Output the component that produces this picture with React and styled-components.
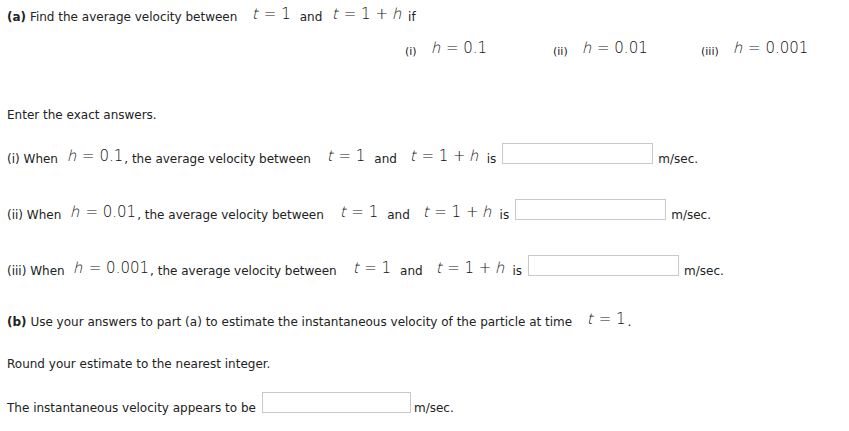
import React from "react";
import styled, { createGlobalStyle } from "styled-components";

const GlobalStyle = createGlobalStyle`
  body {
    margin: 0;
    background: #fff;
    font-family: "DejaVu Sans", Verdana, sans-serif;
    font-size: 12px;
    color: #222;
  }
`;

const Page = styled.div`
  padding: 2px 0 0 7px;
  width: 849px;
  box-sizing: border-box;
`;

const Line = styled.div`
  height: 24px;
  line-height: 24px;
  white-space: nowrap;
  margin-top: ${({ gap }) => gap || 0}px;
`;

const Label = styled.b`
  font-weight: bold;
`;

const Math = styled.span`
  font-family: "DejaVu Sans", sans-serif;
  font-weight: 200;
  font-size: 15px;
  vertical-align: 2px;
  margin: 0 ${({ right }) => (right === undefined ? 6 : right)}px 0 ${({ left }) => (left === undefined ? 6 : left)}px;
  color: #111;
`;

// slanted letter drawn from the light upright face
const Var = styled.span`
  display: inline-block;
  font-style: normal;
  transform: skewX(-14deg);
`;

const Choices = styled.div`
  display: grid;
  grid-template-columns: repeat(3, 148px);
  padding-left: 398px;
  height: 24px;
  line-height: 24px;
  margin-top: 10px;
`;

const Choice = styled.div`
  white-space: nowrap;
`;

const Small = styled.span`
  font-size: 11px;
  margin-right: 15px;
`;

const Answer = styled.input`
  width: ${({ size }) => size || 151}px;
  height: 21px;
  box-sizing: border-box;
  border: 1px solid #c9c9c9;
  margin: ${({ lift }) => -(lift || 1)}px ${({ after }) => after || 5}px 0 6px;
  padding: 0 3px;
  vertical-align: top;
  font: inherit;
`;

const T1 = (props) => (
  <Math {...props}>
    <Var>t</Var> = 1
  </Math>
);

const T1H = (props) => (
  <Math {...props}>
    <Var>t</Var> = 1 + <Var>h</Var>
  </Math>
);

const H = ({ value, ...props }) => (
  <Math {...props}>
    <Var>h</Var> = {value}
  </Math>
);

const parts = [
  { tag: "(i)", h: "0.1", gap: 17 },
  { tag: "(ii)", h: "0.01", gap: 32 },
  { tag: "(iii)", h: "0.001", gap: 32 },
];

export default function App() {
  return (
    <Page>
      <GlobalStyle />
      <Line>
        <Label>(a)</Label> Find the average velocity between <T1 left={12} right={9} />
        and <T1H left={7} right={2} /> if
      </Line>
      <Choices>
        {parts.map((p) => (
          <Choice key={p.tag}>
            <Small>{p.tag}</Small>
            <H value={p.h} left={0} />
          </Choice>
        ))}
      </Choices>
      <Line gap={43}>Enter the exact answers.</Line>
      {parts.map((p) => (
        <Line key={p.tag} gap={p.gap}>
          {p.tag} When <H value={p.h} left={6} right={1} />, the average velocity between{" "}
          <T1 left={13} right={9} />and <T1H left={10} right={3} /> is
          <Answer type="text" />
          m/sec.
        </Line>
      ))}
      <Line gap={27}>
        <Label>(b)</Label> Use your answers to part (a) to estimate the instantaneous velocity of the
        particle at time <T1 left={12} right={2} />.
      </Line>
      <Line gap={21}>Round your estimate to the nearest integer.</Line>
      <Line gap={20}>
        The instantaneous velocity appears to be
        <Answer type="text" lift={4} size={149} after={3} />
        m/sec.
      </Line>
    </Page>
  );
}
